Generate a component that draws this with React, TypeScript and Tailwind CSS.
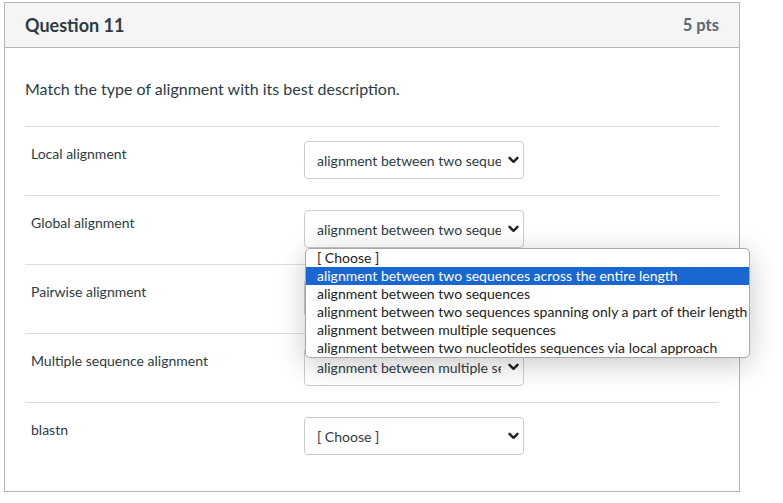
import React from "react";

const Chevron = () => (
  <svg width="11" height="8" viewBox="0 0 11 8" className="shrink-0">
    <path d="M1.5 1.8 L5.5 5.8 L9.5 1.8" fill="none" stroke="#222" strokeWidth="2.4" strokeLinecap="round" strokeLinejoin="round" />
  </svg>
);

function FakeSelect({ text, children }: { text: string; children?: React.ReactNode }) {
  return (
    <div className="relative w-[220px] h-[38px]">
      <div className="w-full h-full rounded-[4px] border border-[#c7cdd1] bg-white flex items-center pl-[12px] pr-[4px]">
        <div className="flex-1 overflow-hidden whitespace-nowrap text-[14px] text-[#2d3b45] mr-[7px]">
          {text}
        </div>
        <Chevron />
      </div>
      {children}
    </div>
  );
}

const options = [
  "[ Choose ]",
  "alignment between two sequences across the entire length",
  "alignment between two sequences",
  "alignment between two sequences spanning only a part of their length",
  "alignment between multiple sequences",
  "alignment between two nucleotides sequences via local approach",
];

function Row({ label, text, children }: { label: string; text: string; children?: React.ReactNode }) {
  return (
    <div className="flex border-t border-[#dcdfe1] h-[69px]">
      <div className="w-[279px] pl-[6px] pt-[16px] text-[14px] text-[#2d3b45]">{label}</div>
      <div className="pt-[14px]">
        <FakeSelect text={text}>{children}</FakeSelect>
      </div>
    </div>
  );
}

export default function App() {
  return (
    <div className="w-[783px] h-[503px] bg-white pt-[2px] pl-[4px]" style={{ fontFamily: "Lato, 'Liberation Sans', sans-serif" }}>
      <div className="w-[736px] h-[490px] border border-[#b5b5b5] bg-white">
        <div className="h-[45px] bg-[#f5f5f5] border-b border-[#b5b5b5] flex items-center justify-between pl-[20px] pr-[20px]">
          <div className="text-[18px] font-bold text-[#2d3b45]">Question 11</div>
          <div className="text-[16.5px] font-bold text-[#5b6770]">5 pts</div>
        </div>
        <div className="px-[20px] pt-[29px]">
          <div className="text-[16px] leading-[24px] text-[#2d3b45] mb-[25px]">Match the type of alignment with its best description.</div>
          <Row label="Local alignment" text="alignment between two sequences across the entire length" />
          <Row label="Global alignment" text="alignment between two sequences across the entire length">
            <div className="absolute left-[1px] top-[38px] z-10 w-[445px] rounded-[5px] border border-[#a8a8a8] bg-white shadow-[0_6px_28px_rgba(0,0,0,0.22)] overflow-hidden">
              {options.map((o, i) => (
                <div
                  key={o}
                  className={`h-[18px] leading-[18px] pl-[11px] text-[14px] whitespace-nowrap ${i === 1 ? "bg-[#1a67d2] text-white" : "text-[#222]"}`}
                >
                  {o}
                </div>
              ))}
            </div>
          </Row>
          <Row label="Pairwise alignment" text="alignment between two sequences" />
          <Row label="Multiple sequence alignment" text="alignment between multiple sequences" />
          <Row label="blastn" text="[ Choose ]" />
        </div>
      </div>
    </div>
  );
}
